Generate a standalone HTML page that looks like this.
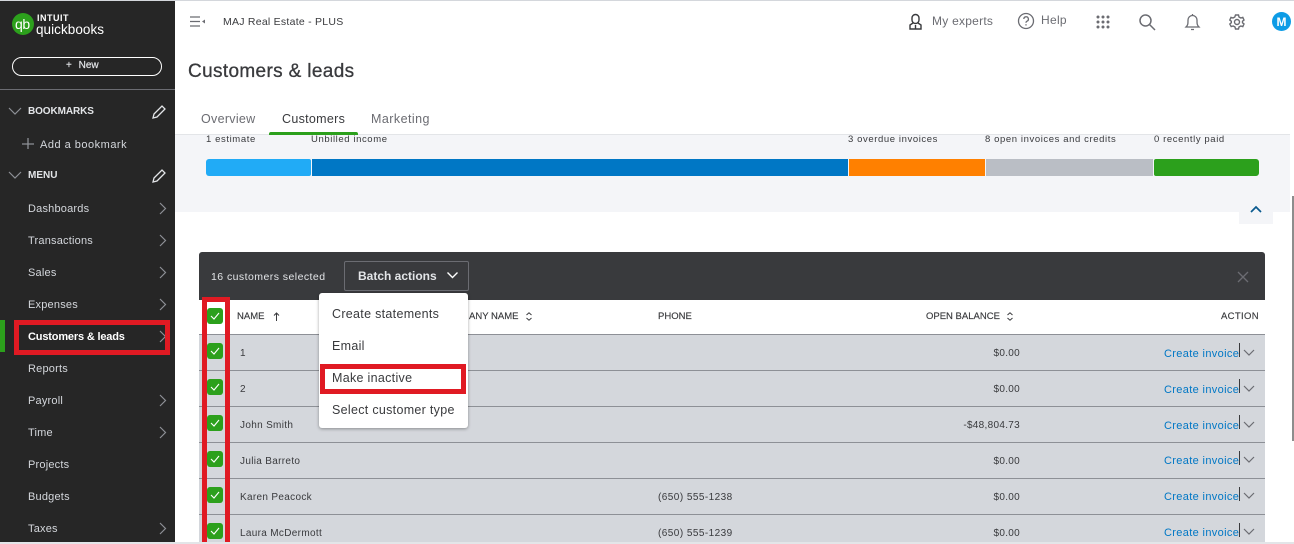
<!DOCTYPE html>
<html lang="en"><head><meta charset="utf-8"><title>Customers &amp; leads</title>
<style>
html,body{margin:0;padding:0;width:1294px;height:544px;overflow:hidden;background:#fff}
body{font-family:"Liberation Sans",sans-serif;position:relative;color:#393a3d}
.a,.t{position:absolute}
.t{white-space:nowrap;line-height:16px}
.nav{left:28px;font-size:11px;color:#d4d7dc;letter-spacing:.2px}
.h{font-size:9.5px;color:#393a3d;top:309px;-webkit-text-stroke:.15px #393a3d}
.n{left:240px;font-size:10px;color:#393a3d;letter-spacing:.32px}
.p{left:658px;font-size:10px;color:#393a3d;letter-spacing:.45px}
.b{right:274px;font-size:10px;color:#393a3d;letter-spacing:.3px}
.ci{left:1164px;font-size:11px;color:#0077c5;letter-spacing:.35px}
.m{font-size:9.5px;color:#393a3d;letter-spacing:.6px;top:132px}
.row{left:199px;width:1066px;height:35px;background:#d4d7dc;border-top:1px solid #8d9096}
.cb{left:207px;width:16px;height:16px;background:#2ca01c;border-radius:3px}
.mi{left:332px;font-size:12.5px;color:#393a3d;letter-spacing:.3px}
svg{position:absolute;overflow:visible}
</style></head><body>
<div class="a" style="left:0;top:0;width:1294px;height:1px;background:#d4d7dc"></div>

<!-- main background -->
<div class="a" style="left:175px;top:135px;width:1115px;height:77px;background:#f4f5f8"></div>
<div class="a" style="left:175px;top:134px;width:1115px;height:1px;background:#e3e5e8"></div>
<div class="a" style="left:1239px;top:212px;width:34px;height:12px;background:#f4f5f8"></div>
<div class="a" style="left:1292px;top:196px;width:2px;height:245px;background:#8d8d8d"></div>

<!-- sidebar -->
<div class="a" style="left:0;top:1px;width:175px;height:541px;background:#262626"></div>
<div class="a" style="left:0;top:89px;width:175px;height:1px;background:#6b6c72"></div>
<div class="a" style="left:12px;top:13px;width:22px;height:22px;border-radius:50%;background:#2ca01c"></div>
<div class="t" style="left:15px;top:16px;font-size:14px;color:#fff;letter-spacing:-.4px">qb</div>
<div class="t" style="left:37px;top:10px;font-size:9px;font-weight:bold;color:#fff;letter-spacing:.5px">INTUIT</div>
<div class="t" style="left:36px;top:22px;font-size:13.500px;color:#fff;letter-spacing:.05px">quickbooks</div>
<div class="a" style="left:12px;top:57px;width:148px;height:17px;border:1px solid #fff;border-radius:10px"></div>
<div class="t" style="left:66px;top:58px;font-size:10px;color:#e3e5e8;word-spacing:4px;-webkit-text-stroke:.2px #e3e5e8">+ New</div>

<svg style="left:0;top:0" width="175" height="544" fill="none" stroke="#8d9096" stroke-width="1.2">
<path d="M9 108l6 6 6-6M9 172l6 6 6-6"/>
<path d="M28 138v11M22 144h12" stroke-width="1.3"/>
<g stroke="#e3e5e8" stroke-width="1.3"><path d="M153 118l1-4 8-8 3 3-8 8z"/><path d="M153 182l1-4 8-8 3 3-8 8z"/></g>
<path d="M160 203l5.500 5.500-5.500 5.500M160 235l5.500 5.500-5.500 5.500M160 267l5.500 5.500-5.500 5.500M160 299l5.500 5.500-5.500 5.500M160 331l5.500 5.500-5.500 5.500M160 395l5.500 5.500-5.500 5.500M160 427l5.500 5.500-5.500 5.500M160 523l5.500 5.500-5.500 5.500" stroke="#8d9096" stroke-width="1.2"/>
</svg>
<div class="t" style="left:28px;top:104px;font-size:10px;font-weight:bold;color:#e3e5e8;letter-spacing:-.1px">BOOKMARKS</div>
<div class="t" style="left:40px;top:137px;font-size:11px;color:#d4d7dc;letter-spacing:.5px">Add a bookmark</div>
<div class="t" style="left:28px;top:168px;font-size:10px;font-weight:bold;color:#e3e5e8">MENU</div>
<div class="t nav" style="top:201px">Dashboards</div>
<div class="t nav" style="top:233px">Transactions</div>
<div class="t nav" style="top:265px">Sales</div>
<div class="t nav" style="top:297px">Expenses</div>
<div class="a" style="left:0;top:320px;width:5px;height:32px;background:#2ca01c"></div>
<div class="a" style="left:14px;top:320px;width:156px;height:35px;box-sizing:border-box;border:5px solid #e01a23"></div>
<div class="t nav" style="top:329px;color:#fff;font-weight:bold;letter-spacing:-.17px">Customers &amp; leads</div>
<div class="t nav" style="top:361px">Reports</div>
<div class="t nav" style="top:393px">Payroll</div>
<div class="t nav" style="top:425px">Time</div>
<div class="t nav" style="top:457px">Projects</div>
<div class="t nav" style="top:489px">Budgets</div>
<div class="t nav" style="top:521px">Taxes</div>

<!-- top bar -->
<svg style="left:190px;top:16px" width="16" height="12" fill="none" stroke="#6b6c72" stroke-width="1.3"><path d="M0 1h10M0 5.500h10M0 10h10"/><path d="M15 3.500v4l-3-2z" fill="#6b6c72" stroke="none"/></svg>
<div class="t" style="left:223px;top:14px;font-size:10.500px;color:#393a3d;letter-spacing:.25px">MAJ Real Estate - PLUS</div>
<svg style="left:908px;top:13px" width="16" height="18" fill="none" stroke="#393a3d" stroke-width="1.4"><path d="M4 5a3.500 3.500 0 0 1 7 0v2a3.500 3.500 0 0 1-7 0zM5 10l-3 2v4h11v-4l-3-2M7.500 12v4"/></svg>
<div class="t" style="left:932px;top:13px;font-size:12px;color:#6b6c72;letter-spacing:.25px">My experts</div>
<svg style="left:1018px;top:12px" width="18" height="18" fill="none" stroke="#6b6c72" stroke-width="1.3"><circle cx="8" cy="9" r="7.500"/><path d="M5.800 7a2.300 2.300 0 1 1 3.200 2.200c-.7.300-1 .8-1 1.600"/><path d="M8 12.200v1.300"/></svg>
<div class="t" style="left:1041px;top:12px;font-size:12px;color:#6b6c72;letter-spacing:.3px">Help</div>
<svg style="left:1096px;top:15px" width="14" height="14" fill="#6b6c72"><circle cx="2" cy="2" r="1.500"/><circle cx="7" cy="2" r="1.500"/><circle cx="12" cy="2" r="1.500"/><circle cx="2" cy="7" r="1.500"/><circle cx="7" cy="7" r="1.500"/><circle cx="12" cy="7" r="1.500"/><circle cx="2" cy="12" r="1.500"/><circle cx="7" cy="12" r="1.500"/><circle cx="12" cy="12" r="1.500"/></svg>
<svg style="left:1139px;top:14px" width="17" height="17" fill="none" stroke="#6b6c72" stroke-width="1.500"><circle cx="6.500" cy="6.500" r="5.500"/><path d="M10.500 10.500l5.500 5.500"/></svg>
<svg style="left:1185px;top:13px" width="15" height="18" fill="none" stroke="#6b6c72" stroke-width="1.300"><path d="M1 14c2-2 2-3 2-7a4.500 4.500 0 0 1 9 0c0 4 0 5 2 7zM6 16.500h3M7.500 1v1"/></svg>
<svg style="left:1229px;top:14px" width="16" height="16" fill="none" stroke="#6b6c72" stroke-width="1.400"><path d="M6.500 1h3l.5 2 1.800 1 2-.6 1.200 2.600-1.500 1.200v1.600l1.500 1.200-1.200 2.600-2-.6-1.800 1-.5 2h-3l-.5-2-1.800-1-2 .6L.8 10l1.500-1.200V7.200L.8 6 2 3.400l2 .6 1.800-1z"/><circle cx="8" cy="8" r="2.500"/></svg>
<div class="a" style="left:1272px;top:12px;width:19px;height:19px;border-radius:50%;background:#0d9ce6"></div>
<div class="t" style="left:1272px;top:14px;width:19px;text-align:center;font-size:12px;font-weight:bold;color:#fff">M</div>

<div class="t" style="left:188px;top:61px;font-size:19px;line-height:22px;color:#393a3d;letter-spacing:.35px;-webkit-text-stroke:.3px #393a3d">Customers &amp; leads</div>
<div class="t" style="left:201px;top:111px;font-size:12.500px;color:#6b6c72;letter-spacing:.3px">Overview</div>
<div class="t" style="left:282px;top:111px;font-size:12.500px;color:#393a3d;letter-spacing:.3px">Customers</div>
<div class="t" style="left:371px;top:111px;font-size:12.500px;color:#6b6c72;letter-spacing:.45px">Marketing</div>
<div class="a" style="left:269px;top:132px;width:89px;height:3px;background:#2ca01c;border-radius:2px 2px 0 0"></div>

<!-- money bar -->
<div class="t m" style="left:206px">1 estimate</div>
<div class="t m" style="left:311px">Unbilled income</div>
<div class="t m" style="left:848px">3 overdue invoices</div>
<div class="t m" style="left:985px">8 open invoices and credits</div>
<div class="t m" style="left:1154px">0 recently paid</div>
<div class="a" style="left:206px;top:159px;width:105px;height:17px;background:#21abf6;border-radius:3px 2px 2px 3px"></div>
<div class="a" style="left:312px;top:159px;width:536px;height:17px;background:#0077c5"></div>
<div class="a" style="left:849px;top:159px;width:136px;height:17px;background:#ff8000"></div>
<div class="a" style="left:986px;top:159px;width:167px;height:17px;background:#babec5"></div>
<div class="a" style="left:1154px;top:159px;width:105px;height:17px;background:#2ca01c;border-radius:2px 3px 3px 2px"></div>
<svg style="left:1250px;top:205px" width="12" height="8" fill="none" stroke="#0a5a8f" stroke-width="1.700"><path d="M1 7l5-5 5 5"/></svg>

<!-- batch bar -->
<div class="a" style="left:199px;top:252px;width:1066px;height:48px;background:#393a3d;border-radius:3px 3px 0 0"></div>
<div class="t" style="left:211px;top:269px;font-size:10.500px;color:#e3e5e8;letter-spacing:.45px">16 customers selected</div>
<div class="a" style="left:344px;top:261px;width:123px;height:28px;border:1px solid #6b6c72;border-radius:2px"></div>
<div class="t" style="left:358px;top:268px;font-size:12px;font-weight:bold;color:#e3e5e8">Batch actions</div>
<svg style="left:447px;top:272px" width="11" height="7" fill="none" stroke="#fff" stroke-width="1.400"><path d="M.5 .5l5 5 5-5"/></svg>
<svg style="left:1238px;top:272px" width="10" height="10" fill="none" stroke="#6b6c72" stroke-width="1.300"><path d="M0 0l10 10M10 0L0 10"/></svg>

<!-- table -->
<div class="t h" style="left:237px">NAME</div>
<svg style="left:273px;top:312px" width="7" height="9" fill="none" stroke="#393a3d"><path d="M3.500 9V1M1 3.500L3.500 1 6 3.500"/></svg>
<div class="t h" style="left:469px">ANY NAME</div>
<svg style="left:526px;top:312px" width="6" height="9" fill="none" stroke="#393a3d"><path d="M.5 3L3 .8 5.500 3M.5 6L3 8.200 5.500 6"/></svg>
<div class="t h" style="left:658px">PHONE</div>
<div class="t h" style="left:926px">OPEN BALANCE</div>
<svg style="left:1007px;top:312px" width="6" height="9" fill="none" stroke="#393a3d"><path d="M.5 3L3 .8 5.500 3M.5 6L3 8.200 5.500 6"/></svg>
<div class="t h" style="left:1221px;letter-spacing:.35px">ACTION</div>

<div class="a row" style="top:334px"></div>
<div class="a row" style="top:370px"></div>
<div class="a row" style="top:406px"></div>
<div class="a row" style="top:442px"></div>
<div class="a row" style="top:478px"></div>
<div class="a row" style="top:514px;height:28px"></div>

<div class="t n" style="top:346px">1</div>
<div class="t n" style="top:382px">2</div>
<div class="t n" style="top:418px">John Smith</div>
<div class="t n" style="top:454px">Julia Barreto</div>
<div class="t n" style="top:490px">Karen Peacock</div>
<div class="t n" style="top:526px">Laura McDermott</div>
<div class="t p" style="top:490px">(650) 555-1238</div>
<div class="t p" style="top:526px">(650) 555-1239</div>
<div class="t b" style="top:346px">$0.00</div>
<div class="t b" style="top:382px">$0.00</div>
<div class="t b" style="top:418px">-$48,804.73</div>
<div class="t b" style="top:454px">$0.00</div>
<div class="t b" style="top:490px">$0.00</div>
<div class="t b" style="top:526px">$0.00</div>
<div class="t ci" style="top:346px">Create invoice</div>
<div class="t ci" style="top:382px">Create invoice</div>
<div class="t ci" style="top:418px">Create invoice</div>
<div class="t ci" style="top:453px">Create invoice</div>
<div class="t ci" style="top:489px">Create invoice</div>
<div class="t ci" style="top:525px">Create invoice</div>
<svg style="left:1239px;top:340px" width="20" height="204" fill="none" stroke="#6b6c72" stroke-width="1.200">
<path d="M.5 3v14M.5 39v14M.5 75v14M.5 111v14M.5 147v14M.5 183v14" stroke="#393a3d" stroke-width="1"/>
<path d="M5 10l5 5 5-5M5 46l5 5 5-5M5 82l5 5 5-5M5 117l5 5 5-5M5 153l5 5 5-5M5 189l5 5 5-5"/>
</svg>

<!-- red column + checkboxes -->
<div class="a" style="left:202px;top:297px;width:28px;height:247px;box-sizing:border-box;border:5px solid #e01a23;border-bottom:0"></div>
<div class="a cb" style="top:308px"></div>
<div class="a cb" style="top:343px"></div>
<div class="a cb" style="top:379px"></div>
<div class="a cb" style="top:415px"></div>
<div class="a cb" style="top:451px"></div>
<div class="a cb" style="top:487px"></div>
<div class="a cb" style="top:523px"></div>
<svg style="left:207px;top:300px" width="16" height="244" fill="none" stroke="#fff" stroke-width="1.100">
<path d="M4 16l3 3 5-6M4 51l3 3 5-6M4 87l3 3 5-6M4 123l3 3 5-6M4 159l3 3 5-6M4 195l3 3 5-6M4 231l3 3 5-6"/>
</svg>

<!-- dropdown -->
<div class="a" style="left:319px;top:293px;width:149px;height:135px;background:#fff;border-radius:3px;box-shadow:0 1px 3px rgba(0,0,0,.35)"></div>
<div class="t mi" style="top:306px">Create statements</div>
<div class="t mi" style="top:338px">Email</div>
<div class="a" style="left:320px;top:364px;width:146px;height:30px;box-sizing:border-box;border:5px solid #e01a23"></div>
<div class="t mi" style="top:370px">Make inactive</div>
<div class="t mi" style="top:402px">Select customer type</div>

<div class="a" style="left:0;top:542px;width:1294px;height:2px;background:#e3e5e8"></div>
</body></html>
